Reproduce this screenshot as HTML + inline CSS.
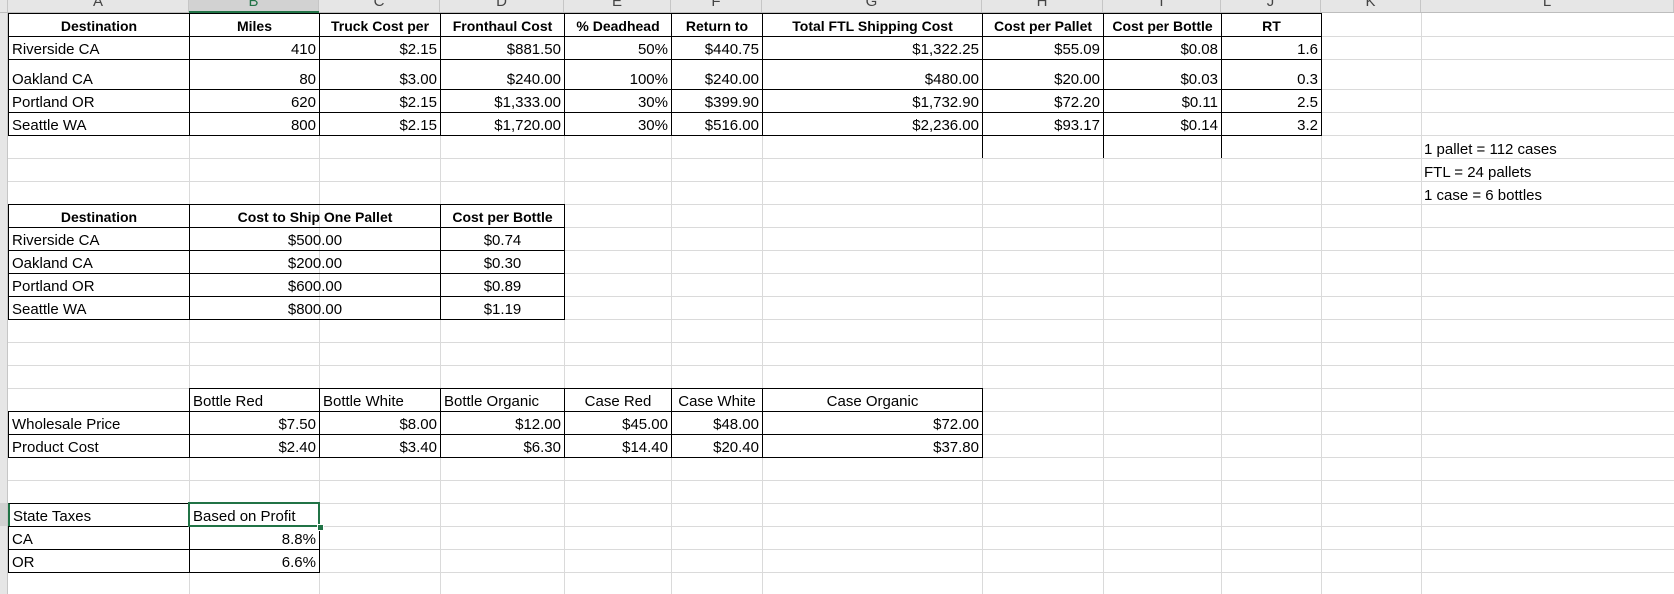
<!DOCTYPE html>
<html><head><meta charset="utf-8"><style>
html,body{margin:0;padding:0;width:1674px;height:594px;overflow:hidden;background:#fff;font-family:"Liberation Sans",Arial,sans-serif;font-size:15px;color:#000}
.g{position:absolute;background:#dadada}
.c{position:absolute;box-sizing:border-box;border:1px solid #000;display:flex;align-items:flex-end;padding:0 3px 1px 3px;white-space:nowrap;overflow:hidden;line-height:17px}
.t{position:absolute;box-sizing:border-box;display:flex;align-items:flex-end;padding:0 3px 1px 3px;white-space:nowrap;line-height:17px}
.n{justify-content:flex-end}.m{justify-content:center}
.b{font-weight:bold;font-size:14px}
.h{position:absolute;top:0;height:13px;overflow:hidden;background:#e6e6e6;border-right:1px solid #c6c6c6;box-sizing:border-box;text-align:center;color:#444;font-size:15px;line-height:13px}
.h span{position:relative;top:-5px}
</style></head><body>
<div style="position:absolute;left:0;top:0;width:1674px;height:13px;background:#e6e6e6"></div>
<div class="h" style="left:0;width:8px"></div>
<div class="h" style="left:8px;width:181px"><span>A</span></div>
<div class="h" style="left:189px;width:130px;background:#d2d2d2;color:#217346"><span>B</span></div>
<div class="h" style="left:319px;width:121px"><span>C</span></div>
<div class="h" style="left:440px;width:124px"><span>D</span></div>
<div class="h" style="left:564px;width:107px"><span>E</span></div>
<div class="h" style="left:671px;width:91px"><span>F</span></div>
<div class="h" style="left:762px;width:220px"><span>G</span></div>
<div class="h" style="left:982px;width:121px"><span>H</span></div>
<div class="h" style="left:1103px;width:118px"><span>I</span></div>
<div class="h" style="left:1221px;width:100px"><span>J</span></div>
<div class="h" style="left:1321px;width:100px"><span>K</span></div>
<div class="h" style="left:1421px;width:253px"><span>L</span></div>
<div style="position:absolute;left:0;top:12px;width:1674px;height:1px;background:#bdbdbd"></div>
<div style="position:absolute;left:189px;top:11px;width:130px;height:2px;background:#217346"></div>
<div style="position:absolute;left:0;top:13px;width:7px;height:581px;background:#e6e6e6;border-right:1px solid #c6c6c6"></div>
<div style="position:absolute;left:0;top:503px;width:7px;height:23px;background:#d2d2d2"></div>

<div class="g" style="left:189px;top:13px;width:1px;height:581px"></div>
<div class="g" style="left:319px;top:13px;width:1px;height:581px"></div>
<div class="g" style="left:440px;top:13px;width:1px;height:581px"></div>
<div class="g" style="left:564px;top:13px;width:1px;height:581px"></div>
<div class="g" style="left:671px;top:13px;width:1px;height:581px"></div>
<div class="g" style="left:762px;top:13px;width:1px;height:581px"></div>
<div class="g" style="left:982px;top:13px;width:1px;height:581px"></div>
<div class="g" style="left:1103px;top:13px;width:1px;height:581px"></div>
<div class="g" style="left:1221px;top:13px;width:1px;height:581px"></div>
<div class="g" style="left:1321px;top:13px;width:1px;height:581px"></div>
<div class="g" style="left:1421px;top:13px;width:1px;height:581px"></div>
<div class="g" style="left:8px;top:36px;width:1666px;height:1px"></div>
<div class="g" style="left:8px;top:59px;width:1666px;height:1px"></div>
<div class="g" style="left:8px;top:89px;width:1666px;height:1px"></div>
<div class="g" style="left:8px;top:112px;width:1666px;height:1px"></div>
<div class="g" style="left:8px;top:135px;width:1666px;height:1px"></div>
<div class="g" style="left:8px;top:158px;width:1666px;height:1px"></div>
<div class="g" style="left:8px;top:181px;width:1666px;height:1px"></div>
<div class="g" style="left:8px;top:204px;width:1666px;height:1px"></div>
<div class="g" style="left:8px;top:227px;width:1666px;height:1px"></div>
<div class="g" style="left:8px;top:250px;width:1666px;height:1px"></div>
<div class="g" style="left:8px;top:273px;width:1666px;height:1px"></div>
<div class="g" style="left:8px;top:296px;width:1666px;height:1px"></div>
<div class="g" style="left:8px;top:319px;width:1666px;height:1px"></div>
<div class="g" style="left:8px;top:342px;width:1666px;height:1px"></div>
<div class="g" style="left:8px;top:365px;width:1666px;height:1px"></div>
<div class="g" style="left:8px;top:388px;width:1666px;height:1px"></div>
<div class="g" style="left:8px;top:411px;width:1666px;height:1px"></div>
<div class="g" style="left:8px;top:434px;width:1666px;height:1px"></div>
<div class="g" style="left:8px;top:457px;width:1666px;height:1px"></div>
<div class="g" style="left:8px;top:480px;width:1666px;height:1px"></div>
<div class="g" style="left:8px;top:503px;width:1666px;height:1px"></div>
<div class="g" style="left:8px;top:526px;width:1666px;height:1px"></div>
<div class="g" style="left:8px;top:549px;width:1666px;height:1px"></div>
<div class="g" style="left:8px;top:572px;width:1666px;height:1px"></div>

<div class="c m b" style="left:8px;top:13px;width:182px;height:24px">Destination</div>
<div class="c m b" style="left:189px;top:13px;width:131px;height:24px">Miles</div>
<div class="c m b" style="left:319px;top:13px;width:122px;height:24px">Truck Cost per</div>
<div class="c m b" style="left:440px;top:13px;width:125px;height:24px">Fronthaul Cost</div>
<div class="c m b" style="left:564px;top:13px;width:108px;height:24px">% Deadhead</div>
<div class="c m b" style="left:671px;top:13px;width:92px;height:24px">Return to</div>
<div class="c m b" style="left:762px;top:13px;width:221px;height:24px">Total FTL Shipping Cost</div>
<div class="c m b" style="left:982px;top:13px;width:122px;height:24px">Cost per Pallet</div>
<div class="c m b" style="left:1103px;top:13px;width:119px;height:24px">Cost per Bottle</div>
<div class="c m b" style="left:1221px;top:13px;width:101px;height:24px">RT</div>
<div class="c" style="left:8px;top:36px;width:182px;height:24px">Riverside CA</div>
<div class="c n" style="left:189px;top:36px;width:131px;height:24px">410</div>
<div class="c n" style="left:319px;top:36px;width:122px;height:24px">$2.15</div>
<div class="c n" style="left:440px;top:36px;width:125px;height:24px">$881.50</div>
<div class="c n" style="left:564px;top:36px;width:108px;height:24px">50%</div>
<div class="c n" style="left:671px;top:36px;width:92px;height:24px">$440.75</div>
<div class="c n" style="left:762px;top:36px;width:221px;height:24px">$1,322.25</div>
<div class="c n" style="left:982px;top:36px;width:122px;height:24px">$55.09</div>
<div class="c n" style="left:1103px;top:36px;width:119px;height:24px">$0.08</div>
<div class="c n" style="left:1221px;top:36px;width:101px;height:24px">1.6</div>
<div class="c" style="left:8px;top:59px;width:182px;height:31px">Oakland CA</div>
<div class="c n" style="left:189px;top:59px;width:131px;height:31px">80</div>
<div class="c n" style="left:319px;top:59px;width:122px;height:31px">$3.00</div>
<div class="c n" style="left:440px;top:59px;width:125px;height:31px">$240.00</div>
<div class="c n" style="left:564px;top:59px;width:108px;height:31px">100%</div>
<div class="c n" style="left:671px;top:59px;width:92px;height:31px">$240.00</div>
<div class="c n" style="left:762px;top:59px;width:221px;height:31px">$480.00</div>
<div class="c n" style="left:982px;top:59px;width:122px;height:31px">$20.00</div>
<div class="c n" style="left:1103px;top:59px;width:119px;height:31px">$0.03</div>
<div class="c n" style="left:1221px;top:59px;width:101px;height:31px">0.3</div>
<div class="c" style="left:8px;top:89px;width:182px;height:24px">Portland OR</div>
<div class="c n" style="left:189px;top:89px;width:131px;height:24px">620</div>
<div class="c n" style="left:319px;top:89px;width:122px;height:24px">$2.15</div>
<div class="c n" style="left:440px;top:89px;width:125px;height:24px">$1,333.00</div>
<div class="c n" style="left:564px;top:89px;width:108px;height:24px">30%</div>
<div class="c n" style="left:671px;top:89px;width:92px;height:24px">$399.90</div>
<div class="c n" style="left:762px;top:89px;width:221px;height:24px">$1,732.90</div>
<div class="c n" style="left:982px;top:89px;width:122px;height:24px">$72.20</div>
<div class="c n" style="left:1103px;top:89px;width:119px;height:24px">$0.11</div>
<div class="c n" style="left:1221px;top:89px;width:101px;height:24px">2.5</div>
<div class="c" style="left:8px;top:112px;width:182px;height:24px">Seattle WA</div>
<div class="c n" style="left:189px;top:112px;width:131px;height:24px">800</div>
<div class="c n" style="left:319px;top:112px;width:122px;height:24px">$2.15</div>
<div class="c n" style="left:440px;top:112px;width:125px;height:24px">$1,720.00</div>
<div class="c n" style="left:564px;top:112px;width:108px;height:24px">30%</div>
<div class="c n" style="left:671px;top:112px;width:92px;height:24px">$516.00</div>
<div class="c n" style="left:762px;top:112px;width:221px;height:24px">$2,236.00</div>
<div class="c n" style="left:982px;top:112px;width:122px;height:24px">$93.17</div>
<div class="c n" style="left:1103px;top:112px;width:119px;height:24px">$0.14</div>
<div class="c n" style="left:1221px;top:112px;width:101px;height:24px">3.2</div>
<div style="position:absolute;left:982px;top:135px;width:1px;height:23px;background:#000"></div>
<div style="position:absolute;left:1103px;top:135px;width:1px;height:23px;background:#000"></div>
<div style="position:absolute;left:1221px;top:135px;width:1px;height:23px;background:#000"></div>

<div class="t" style="left:1421px;top:135px;width:253px;height:24px">1 pallet = 112 cases</div>
<div class="t" style="left:1421px;top:158px;width:253px;height:24px">FTL = 24 pallets</div>
<div class="t" style="left:1421px;top:181px;width:253px;height:24px">1 case = 6 bottles</div>

<div class="c m b" style="left:8px;top:204px;width:182px;height:24px">Destination</div>
<div class="c m b" style="left:189px;top:204px;width:252px;height:24px">Cost to Ship One Pallet</div>
<div class="c m b" style="left:440px;top:204px;width:125px;height:24px">Cost per Bottle</div>
<div class="c" style="left:8px;top:227px;width:182px;height:24px">Riverside CA</div>
<div class="c m" style="left:189px;top:227px;width:252px;height:24px">$500.00</div>
<div class="c m" style="left:440px;top:227px;width:125px;height:24px">$0.74</div>
<div class="c" style="left:8px;top:250px;width:182px;height:24px">Oakland CA</div>
<div class="c m" style="left:189px;top:250px;width:252px;height:24px">$200.00</div>
<div class="c m" style="left:440px;top:250px;width:125px;height:24px">$0.30</div>
<div class="c" style="left:8px;top:273px;width:182px;height:24px">Portland OR</div>
<div class="c m" style="left:189px;top:273px;width:252px;height:24px">$600.00</div>
<div class="c m" style="left:440px;top:273px;width:125px;height:24px">$0.89</div>
<div class="c" style="left:8px;top:296px;width:182px;height:24px">Seattle WA</div>
<div class="c m" style="left:189px;top:296px;width:252px;height:24px">$800.00</div>
<div class="c m" style="left:440px;top:296px;width:125px;height:24px">$1.19</div>

<div class="c" style="left:189px;top:388px;width:131px;height:24px">Bottle Red</div>
<div class="c" style="left:319px;top:388px;width:122px;height:24px">Bottle White</div>
<div class="c" style="left:440px;top:388px;width:125px;height:24px">Bottle Organic</div>
<div class="c m" style="left:564px;top:388px;width:108px;height:24px">Case Red</div>
<div class="c m" style="left:671px;top:388px;width:92px;height:24px">Case White</div>
<div class="c m" style="left:762px;top:388px;width:221px;height:24px">Case Organic</div>
<div class="c" style="left:8px;top:411px;width:182px;height:24px">Wholesale Price</div>
<div class="c n" style="left:189px;top:411px;width:131px;height:24px">$7.50</div>
<div class="c n" style="left:319px;top:411px;width:122px;height:24px">$8.00</div>
<div class="c n" style="left:440px;top:411px;width:125px;height:24px">$12.00</div>
<div class="c n" style="left:564px;top:411px;width:108px;height:24px">$45.00</div>
<div class="c n" style="left:671px;top:411px;width:92px;height:24px">$48.00</div>
<div class="c n" style="left:762px;top:411px;width:221px;height:24px">$72.00</div>
<div class="c" style="left:8px;top:434px;width:182px;height:24px">Product Cost</div>
<div class="c n" style="left:189px;top:434px;width:131px;height:24px">$2.40</div>
<div class="c n" style="left:319px;top:434px;width:122px;height:24px">$3.40</div>
<div class="c n" style="left:440px;top:434px;width:125px;height:24px">$6.30</div>
<div class="c n" style="left:564px;top:434px;width:108px;height:24px">$14.40</div>
<div class="c n" style="left:671px;top:434px;width:92px;height:24px">$20.40</div>
<div class="c n" style="left:762px;top:434px;width:221px;height:24px">$37.80</div>

<div class="c" style="left:8px;top:503px;width:182px;height:24px;border-left:2px solid #217346">State Taxes</div>
<div class="c" style="left:189px;top:503px;width:131px;height:24px">Based on Profit</div>
<div class="c" style="left:8px;top:526px;width:182px;height:24px">CA</div>
<div class="c n" style="left:189px;top:526px;width:131px;height:24px">8.8%</div>
<div class="c" style="left:8px;top:549px;width:182px;height:24px">OR</div>
<div class="c n" style="left:189px;top:549px;width:131px;height:24px">6.6%</div>
<div style="position:absolute;left:188px;top:502px;width:132px;height:25px;box-sizing:border-box;border:2px solid #217346"></div>
<div style="position:absolute;left:317px;top:524px;width:5px;height:5px;background:#217346;border:1px solid #fff"></div>
</body></html>
